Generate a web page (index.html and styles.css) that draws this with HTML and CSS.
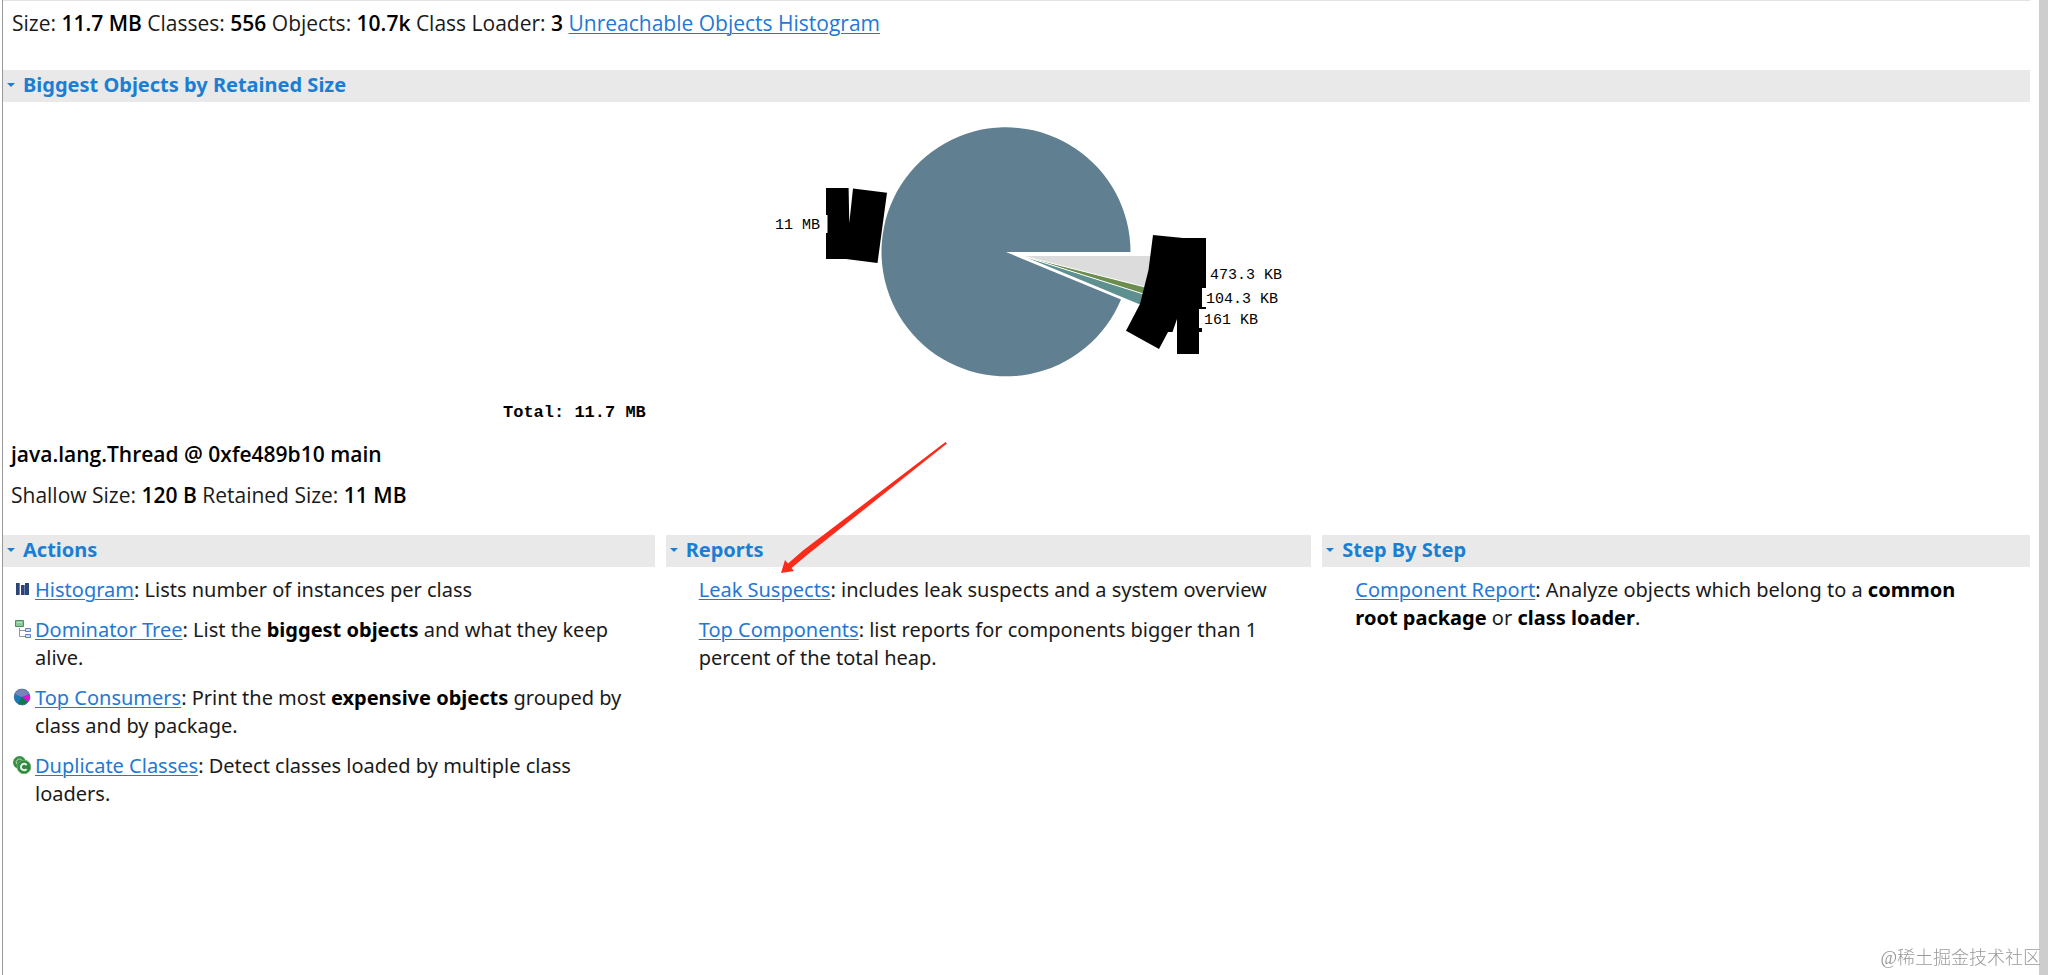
FILE: index.html
```html
<!DOCTYPE html>
<html lang="en">
<head>
<meta charset="utf-8">
<title>Heap Overview</title>
<link rel="stylesheet" href="styles.css">
</head>
<body>
<div class="window">
  <main class="page">
    <p class="summary">Size: <b>11.7 MB</b> Classes: <b>556</b> Objects: <b>10.7k</b> Class Loader: <b>3</b> <a href="#unreachable">Unreachable Objects Histogram</a></p>

    <section class="biggest">
      <h2 class="bar"><button class="toggle" type="button"><span class="twistie"></span>Biggest Objects by Retained Size</button></h2>
      <svg class="chart" viewBox="3 102 2027 332" role="img" aria-label="Biggest objects by retained size">
        <path class="slice-thread" d="M1006 252H1130.500A124.500 124.500 0 1 0 1121 299.500Z"/>
        <path class="slice-rest" d="M1023 256H1153V289Z"/>
        <path class="slice-b" d="M1023 256L1153 289V297Z"/>
        <path class="slice-c" d="M1023 256L1153 297L1140 304.500Z"/>
        <path class="slice-gap" d="M1023 256L1153 289M1023 256L1153 297"/>
        <path class="label-line" d="M826 188H848.600L849.300 223L853 188.500L887 192.700L877.500 263L846 259H826V233H827.500V215H826Z"/>
        <path class="label-line" d="M1153 235L1183 238H1206V288H1202V307H1206V309H1199V328H1202V332H1199V354H1177V319L1172.500 332H1168L1159 349L1126 330.700L1140 304L1148.500 270Z"/>
        <text class="label" x="775" y="229">11 MB</text>
        <text class="label" x="1210" y="279">473.3 KB</text>
        <text class="label" x="1206" y="303">104.3 KB</text>
        <text class="label" x="1204" y="324">161 KB</text>
        <text class="total" x="503" y="417">Total: 11.7 MB</text>
      </svg>
      <p class="object-name">java.lang.Thread @ 0xfe489b10 main</p>
      <p class="object-size">Shallow Size: <b>120 B</b> Retained Size: <b>11 MB</b></p>
    </section>

    <div class="columns">
      <section>
        <h2 class="bar"><button class="toggle" type="button"><span class="twistie"></span>Actions</button></h2>
        <ul class="items">
          <li class="item">
            <svg class="icon" viewBox="0 0 18 18" aria-hidden="true"><path fill="#2c4478" d="M3 3h3v12H3zM8 5h3v10H8zM12 3h4v12h-4z"/><path fill="#6b80a8" d="M6 3h1v12H6zM11 5h1v10h-1z"/></svg>
            <span><a href="#histogram">Histogram</a>: Lists number of instances per class</span>
          </li>
          <li class="item">
            <svg class="icon" viewBox="0 0 18 18" aria-hidden="true"><path fill="none" stroke="#8a98a8" d="M6.500 8v8.500H12M6.500 10.500H12"/><path fill="#8cc79a" stroke="#4c8f5f" d="M2.500 0.500h8v6h-8z"/><path fill="#b9e0c0" d="M4 2h5v1H4z"/><path fill="#cfe0f7" stroke="#6182c4" d="M12.500 8.500h5v3h-5zM12.500 14.500h5v3h-5z"/></svg>
            <span><a href="#dominator">Dominator Tree</a>: List the <b>biggest objects</b> and what they keep alive.</span>
          </li>
          <li class="item">
            <svg class="icon" viewBox="0 0 18 18" aria-hidden="true"><circle cx="9" cy="9" r="8" fill="#1878b8"/><path fill="#7585b8" d="M9 9L1.500 6A8 8 0 0 1 16.500 6Z"/><path fill="#e010d8" d="M9 9L16.700 6.500A8 8 0 0 1 15 14.300Z"/><path fill="#0c7c4c" d="M9 9L14.800 14.500A8 8 0 0 1 5 16Z"/><circle cx="9" cy="9" r="7.800" fill="none" stroke="#5a6ca0" stroke-opacity=".6"/></svg>
            <span><a href="#consumers">Top Consumers</a>: Print the most <b>expensive objects</b> grouped by class and by package.</span>
          </li>
          <li class="item">
            <svg class="icon" viewBox="0 0 18 18" aria-hidden="true"><circle cx="6.500" cy="6.500" r="6.500" fill="#3a8f45"/><path fill="none" stroke="#b6dbb8" d="M8.500 3.500A3.500 3.500 0 0 0 3.500 8"/><circle cx="11" cy="11" r="6.800" fill="#2f8a3e" stroke="#66ad6c"/><path fill="none" stroke="#e8f6e8" stroke-width="2" d="M13.600 9A3.200 3.200 0 1 0 13.600 13"/></svg>
            <span><a href="#duplicates">Duplicate Classes</a>: Detect classes loaded by multiple class loaders.</span>
          </li>
        </ul>
      </section>

      <section class="reports">
        <h2 class="bar"><button class="toggle" type="button"><span class="twistie"></span>Reports</button></h2>
        <ul class="items plain">
          <li class="item"><span><a href="#leaks">Leak Suspects</a>: includes leak suspects and a system overview</span></li>
          <li class="item"><span><a href="#components">Top Components</a>: list reports for components bigger than 1 percent of the total heap.</span></li>
        </ul>
        <svg class="arrow" viewBox="0 0 168 134" aria-hidden="true"><path d="M165.500 1L167 2.500L27 114L11.500 127L14 130L1 132L5 119L8 122.500L23 109.500Z"/></svg>
      </section>

      <section>
        <h2 class="bar"><button class="toggle" type="button"><span class="twistie"></span>Step By Step</button></h2>
        <ul class="items plain">
          <li class="item"><span><a href="#component-report">Component Report</a>: Analyze objects which belong to a <b>common root package</b> or <b>class loader</b>.</span></li>
        </ul>
      </section>
    </div>
  </main>
  <div class="scrollbar"></div>
</div>
<div class="watermark">@稀土掘金技术社区</div>
</body>
</html>
```
FILE: styles.css
```css
* {
  box-sizing: border-box;
}

body {
  margin: 0;
  background: #fff;
  color: #1a1a1a;
  font-family: "Noto Sans", "Open Sans", sans-serif;
  font-size: 20px;
  line-height: 28px;
}

p, h2, ul {
  margin: 0;
  padding: 0;
}

b {
  color: #000;
  font-weight: 700;
}

a {
  color: #2478d4;
  text-decoration-thickness: 1px;
  text-underline-offset: 2px;
}

.window {
  display: flex;
  min-height: 100vh;
  padding-left: 2px;
}

.page {
  flex: 1;
  min-width: 0;
  padding-right: 9px;
  border-left: 1px solid #999;
}

.scrollbar {
  width: 9px;
  background: #cdcdcd;
}

.summary, .object-name, .object-size {
  font-family: "Open Sans", "Noto Sans", sans-serif;
  font-size: 21px;
}

.summary b, .object-size b {
  font-weight: 600;
}

.summary {
  padding: 8px 9px 33px;
  border-top: 1px solid #e3e3e3;
}

.bar {
  height: 32px;
  background: #e9e9e9;
  font-size: 20px;
  line-height: 30px;
}

.toggle {
  display: flex;
  align-items: center;
  gap: 8px;
  padding: 0 0 0 4px;
  border: 0;
  background: none;
  color: #1a7fd4;
  font: inherit;
  font-weight: 700;
}

.twistie {
  border: 4px solid transparent;
  border-top-color: #1a7fd4;
  border-bottom: 0;
}

.chart {
  display: block;
  width: 100%;
}

.slice-thread { fill: #607f90; }
.slice-rest { fill: #dcdcdc; }
.slice-b { fill: #6b8e4e; }
.slice-c { fill: #5f9090; }
.slice-gap { stroke: #fff; }
.label-line { fill: #000; }

.label, .total {
  font-family: "Liberation Mono", monospace;
  font-size: 15px;
}

.total {
  font-size: 17px;
  font-weight: 700;
}

.object-name, .object-size {
  padding: 6px 8px 7px;
}

.object-name {
  color: #000;
  font-weight: 600;
}

.columns {
  display: grid;
  grid-template-columns: 652fr 646fr 708fr;
  gap: 11px;
  margin-top: 19px;
}

.items {
  display: flex;
  flex-direction: column;
  gap: 12px;
  padding: 9px 16px 16px 10px;
  list-style: none;
}

.plain {
  padding-right: 32px;
  padding-left: 33px;
}

.item {
  display: flex;
  gap: 4px;
}

.icon {
  flex: none;
  width: 18px;
  height: 18px;
  margin-top: 4px;
}

.reports {
  position: relative;
}

.arrow {
  position: absolute;
  top: -94px;
  left: 114px;
  width: 168px;
  fill: #fb2b1c;
}

.watermark {
  position: fixed;
  right: 7px;
  bottom: 3px;
  color: #999;
  font-family: "Liberation Serif", "Noto Sans CJK SC", serif;
  font-size: 18px;
  font-weight: 300;
}
```
